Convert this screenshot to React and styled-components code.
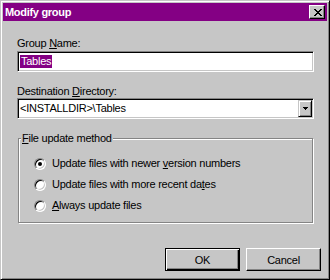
import React from "react";
import styled, { createGlobalStyle } from "styled-components";

const GlobalStyle = createGlobalStyle`
  html, body {
    margin: 0;
    padding: 0;
    background: #c6c6c6;
  }
  body {
    font-family: "Liberation Sans", Arial, sans-serif;
    font-size: 11px;
    letter-spacing: -0.25px;
    color: #000;
  }
`;

const Window = styled.div`
  width: 330px;
  height: 280px;
  box-sizing: border-box;
  background: #c6c6c6;
  border: 1px solid;
  border-color: #c6c6c6 #000 #000 #c6c6c6;
  box-shadow: inset 1px 1px #fff, inset -1px -1px #848484;
  padding: 2px;
  display: flex;
  flex-direction: column;
`;

const TitleBar = styled.div`
  height: 18px;
  background: #840084;
  display: flex;
  align-items: center;
  justify-content: space-between;
  padding: 0 2px 0 2px;
`;

const Title = styled.span`
  color: #fff;
  font-weight: bold;
  font-size: 11px;
  letter-spacing: -0.3px;
  line-height: 13px;
`;

const CloseButton = styled.button`
  width: 16px;
  height: 14px;
  box-sizing: border-box;
  padding: 0 0 0 1px;
  margin: 0;
  background: #c6c6c6;
  border: 1px solid;
  border-color: #fff #000 #000 #fff;
  box-shadow: inset -1px -1px #848484;
  display: flex;
  align-items: center;
  justify-content: center;
`;

const Body = styled.div`
  flex: 1;
  display: flex;
  flex-direction: column;
  padding: 16px 6px 0 14px;
`;

const Fields = styled.div`
  display: flex;
  flex-direction: column;
  margin-right: 7px;
`;

const Label = styled.div`
  line-height: 13px;
  margin-top: ${(p) => p.$top || 0}px;
  margin-bottom: ${(p) => p.$bottom || 0}px;
  u {
    text-underline-offset: 1px;
  }
`;

const Sunken = styled.div`
  height: 21px;
  box-sizing: border-box;
  background: #fff;
  border: 1px solid;
  border-color: #848484 #fff #fff #848484;
  box-shadow: inset 1px 1px #000, inset -1px -1px #c6c6c6;
  display: flex;
  align-items: center;
  padding: ${(p) => (p.$combo ? "1px 1px 1px 2px" : "0 0 0 2px")};
  line-height: 13px;
`;

const Selected = styled.span`
  background: #840084;
  color: #fff;
  padding: 0 1px;
`;

const ComboText = styled.span`
  flex: 1;
`;

const DropButton = styled.span`
  width: 14px;
  height: 17px;
  box-sizing: border-box;
  background: #c6c6c6;
  border: 1px solid;
  border-color: #c6c6c6 #000 #000 #c6c6c6;
  box-shadow: inset 1px 1px #fff, inset -1px -1px #848484;
  display: flex;
  align-items: center;
  justify-content: center;
`;

const GroupBox = styled.div`
  position: relative;
  margin: 19px 1px 0 1px;
  border: 1px solid #848484;
  box-shadow: 1px 1px 0 #fff, inset 1px 1px 0 #fff;
  padding: 14px 0 6px 15px;
  display: flex;
  flex-direction: column;
`;

const Legend = styled.span`
  position: absolute;
  top: -7px;
  left: 2px;
  padding: 0 1px;
  background: #c6c6c6;
  line-height: 13px;
  u {
    text-underline-offset: 1px;
  }
`;

const RadioRow = styled.label`
  height: 21px;
  display: flex;
  align-items: center;
  gap: 6px;
  line-height: 13px;
  u {
    text-underline-offset: 1px;
  }
`;

const RadioCircle = styled.span`
  width: 12px;
  height: 12px;
  box-sizing: border-box;
  border-radius: 50%;
  background: #fff;
  border: 1px solid;
  border-color: #848484 #fff #fff #848484;
  box-shadow: inset 1px 1px #000, inset -1px -1px #c6c6c6;
  display: flex;
  align-items: center;
  justify-content: center;
  &::after {
    content: "";
    display: ${(p) => (p.$checked ? "block" : "none")};
    width: 4px;
    height: 4px;
    border-radius: 50%;
    background: #000;
  }
`;

const Footer = styled.div`
  display: flex;
  justify-content: flex-end;
  gap: 6px;
  margin-top: 25px;
`;

const Button = styled.button`
  width: 75px;
  height: 23px;
  box-sizing: border-box;
  margin: 0;
  padding: 0;
  font-family: inherit;
  font-size: 11px;
  letter-spacing: -0.25px;
  color: #000;
  background: #c6c6c6;
  border: 1px solid;
  border-color: ${(p) => (p.$default ? "#000" : "#fff #000 #000 #fff")};
  box-shadow: ${(p) =>
    p.$default
      ? "inset 1px 1px #fff, inset -1px -1px #000, inset -2px -2px #848484"
      : "inset -1px -1px #848484"};
`;

const CloseGlyph = () => (
  <svg width="8" height="7" viewBox="0 0 8 7" shapeRendering="crispEdges">
    <path
      d="M0 0h2v1H0zM6 0h2v1H6zM1 1h2v1H1zM5 1h2v1H5zM2 2h4v1H2zM3 3h2v1H3zM2 4h4v1H2zM1 5h2v1H1zM5 5h2v1H5zM0 6h2v1H0zM6 6h2v1H6z"
      fill="#000"
    />
  </svg>
);

const DownArrow = () => (
  <svg width="5" height="3" viewBox="0 0 5 3" shapeRendering="crispEdges">
    <path d="M0 0h5v1H0zM1 1h3v1H1zM2 2h1v1H2z" fill="#000" />
  </svg>
);

const options = [
  { key: "newer", checked: true, label: <>Update files with newer <u>v</u>ersion numbers</> },
  { key: "recent", checked: false, label: <>Update files with more recent da<u>t</u>es</> },
  { key: "always", checked: false, label: <><u>A</u>lways update files</> },
];

function App() {
  return (
    <>
      <GlobalStyle />
      <Window>
        <TitleBar>
          <Title>Modify group</Title>
          <CloseButton aria-label="Close">
            <CloseGlyph />
          </CloseButton>
        </TitleBar>
        <Body>
          <Fields>
            <Label $bottom={1}>
              Group <u>N</u>ame:
            </Label>
            <Sunken>
              <Selected>Tables</Selected>
            </Sunken>
            <Label $top={13}>
              Destination <u>D</u>irectory:
            </Label>
            <Sunken $combo>
              <ComboText>&lt;INSTALLDIR&gt;\Tables</ComboText>
              <DropButton>
                <DownArrow />
              </DropButton>
            </Sunken>
            <GroupBox>
              <Legend>
                <u>F</u>ile update method
              </Legend>
              {options.map((o) => (
                <RadioRow key={o.key}>
                  <RadioCircle $checked={o.checked} />
                  <span>{o.label}</span>
                </RadioRow>
              ))}
            </GroupBox>
          </Fields>
          <Footer>
            <Button $default>OK</Button>
            <Button>Cancel</Button>
          </Footer>
        </Body>
      </Window>
    </>
  );
}

export default App;
